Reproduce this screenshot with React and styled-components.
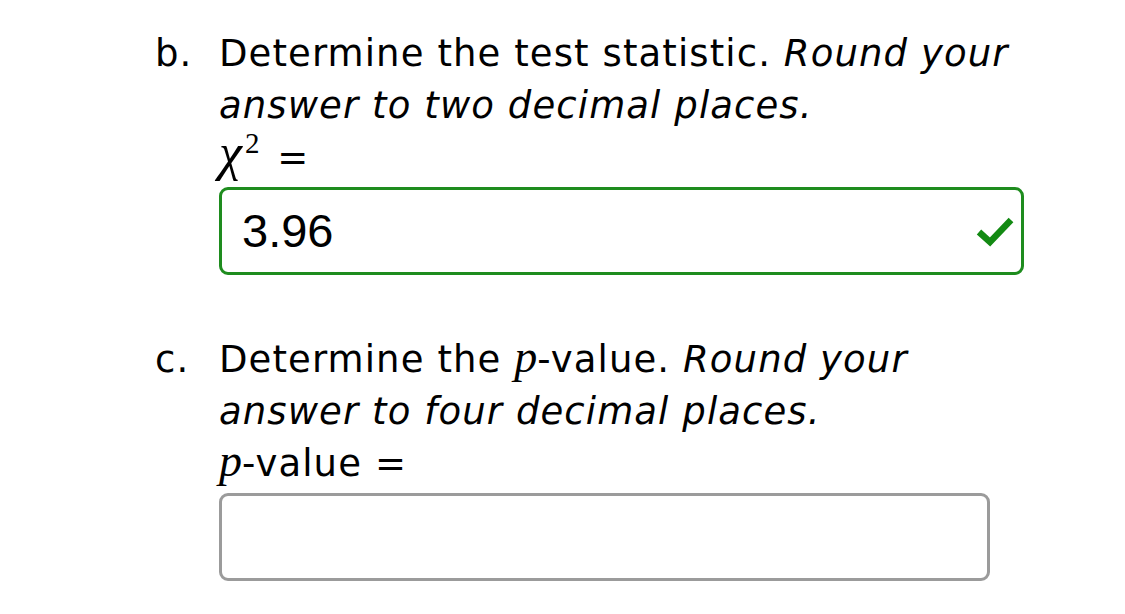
import React from "react";
import styled, { createGlobalStyle } from "styled-components";

const Global = createGlobalStyle`
  html, body { margin: 0; padding: 0; background: #fff; }
  body { font-family: "DejaVu Sans", Verdana, sans-serif; color: #000; }
`;

const Page = styled.div`
  display: flex;
  flex-direction: column;
  gap: 59px;
  padding: 28px 0 0 155px;
`;

const Part = styled.div`
  display: grid;
  grid-template-columns: 64px 805px;
  font-size: 37px;
  line-height: 52px;
  letter-spacing: 1.1px;
`;

const Label = styled.div``;

const Body = styled.div`
  display: flex;
  flex-direction: column;
`;

const Prompt = styled.div``;

const Hint = styled.em`
  font-style: italic;
`;

/* math glyphs sit on the text baseline without stretching the line box */
const MathVar = styled.span`
  font-family: "Liberation Serif", "Times New Roman", serif;
  font-style: italic;
  font-size: ${(p) => p.$size || 46}px;
  letter-spacing: 0;
  line-height: 0;
`;

const Sup = styled.sup`
  font-family: "Liberation Serif", "Times New Roman", serif;
  font-style: normal;
  font-size: 29px;
  line-height: 0;
  vertical-align: 0;
  position: relative;
  top: -17px;
  margin-left: 3px;
  margin-right: 4px;
`;

const Equation = styled.div`
  height: 52px;
`;

const Field = styled.div`
  box-sizing: border-box;
  width: ${(p) => p.$width}px;
  height: 88px;
  margin-top: 3px;
  border: 3px solid ${(p) => (p.$correct ? "#1e8c1e" : "#9b9b9b")};
  border-radius: 9px;
  display: flex;
  align-items: center;
  justify-content: space-between;
  padding: 0 6px 0 20px;
`;

const Value = styled.span`
  font-family: "Liberation Sans", Arial, sans-serif;
  font-size: 47px;
  letter-spacing: 0;
`;

const Check = () => (
  <svg width="40" height="34" viewBox="0 0 40 34" aria-hidden="true">
    <path d="M4 18 L15 28 L36 6" fill="none" stroke="#138a13" strokeWidth="6.5" strokeLinecap="butt" strokeLinejoin="miter" />
  </svg>
);

export default function App() {
  return (
    <>
      <Global />
      <Page>
        <Part>
          <Label>b.</Label>
          <Body>
            <Prompt>
              Determine the test statistic. <Hint>Round your answer to two decimal places.</Hint>
            </Prompt>
            <Equation>
              <MathVar $size={52}>χ</MathVar>
              <Sup>2</Sup> =
            </Equation>
            <Field $width={805} $correct>
              <Value>3.96</Value>
              <Check />
            </Field>
          </Body>
        </Part>
        <Part>
          <Label>c.</Label>
          <Body>
            <Prompt>
              Determine the <MathVar>p</MathVar>-value. <Hint>Round your answer to four decimal places.</Hint>
            </Prompt>
            <Equation>
              <MathVar>p</MathVar>-value =
            </Equation>
            <Field $width={771} />
          </Body>
        </Part>
      </Page>
    </>
  );
}
